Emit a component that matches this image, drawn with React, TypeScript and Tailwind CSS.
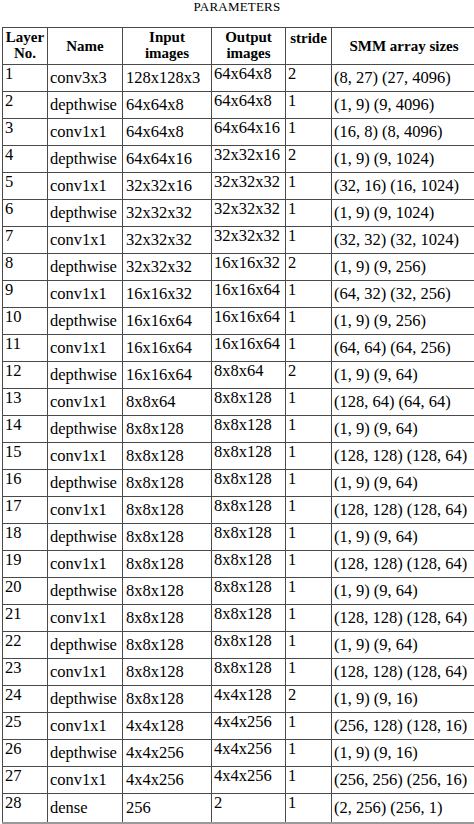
const rows: [string, string, string, string, string, string][] = [
  ["1", "conv3x3", "128x128x3", "64x64x8", "2", "(8, 27) (27, 4096)"],
  ["2", "depthwise", "64x64x8", "64x64x8", "1", "(1, 9) (9, 4096)"],
  ["3", "conv1x1", "64x64x8", "64x64x16", "1", "(16, 8) (8, 4096)"],
  ["4", "depthwise", "64x64x16", "32x32x16", "2", "(1, 9) (9, 1024)"],
  ["5", "conv1x1", "32x32x16", "32x32x32", "1", "(32, 16) (16, 1024)"],
  ["6", "depthwise", "32x32x32", "32x32x32", "1", "(1, 9) (9, 1024)"],
  ["7", "conv1x1", "32x32x32", "32x32x32", "1", "(32, 32) (32, 1024)"],
  ["8", "depthwise", "32x32x32", "16x16x32", "2", "(1, 9) (9, 256)"],
  ["9", "conv1x1", "16x16x32", "16x16x64", "1", "(64, 32) (32, 256)"],
  ["10", "depthwise", "16x16x64", "16x16x64", "1", "(1, 9) (9, 256)"],
  ["11", "conv1x1", "16x16x64", "16x16x64", "1", "(64, 64) (64, 256)"],
  ["12", "depthwise", "16x16x64", "8x8x64", "2", "(1, 9) (9, 64)"],
  ["13", "conv1x1", "8x8x64", "8x8x128", "1", "(128, 64) (64, 64)"],
  ["14", "depthwise", "8x8x128", "8x8x128", "1", "(1, 9) (9, 64)"],
  ["15", "conv1x1", "8x8x128", "8x8x128", "1", "(128, 128) (128, 64)"],
  ["16", "depthwise", "8x8x128", "8x8x128", "1", "(1, 9) (9, 64)"],
  ["17", "conv1x1", "8x8x128", "8x8x128", "1", "(128, 128) (128, 64)"],
  ["18", "depthwise", "8x8x128", "8x8x128", "1", "(1, 9) (9, 64)"],
  ["19", "conv1x1", "8x8x128", "8x8x128", "1", "(128, 128) (128, 64)"],
  ["20", "depthwise", "8x8x128", "8x8x128", "1", "(1, 9) (9, 64)"],
  ["21", "conv1x1", "8x8x128", "8x8x128", "1", "(128, 128) (128, 64)"],
  ["22", "depthwise", "8x8x128", "8x8x128", "1", "(1, 9) (9, 64)"],
  ["23", "conv1x1", "8x8x128", "8x8x128", "1", "(128, 128) (128, 64)"],
  ["24", "depthwise", "8x8x128", "4x4x128", "2", "(1, 9) (9, 16)"],
  ["25", "conv1x1", "4x4x128", "4x4x256", "1", "(256, 128) (128, 16)"],
  ["26", "depthwise", "4x4x256", "4x4x256", "1", "(1, 9) (9, 16)"],
  ["27", "conv1x1", "4x4x256", "4x4x256", "1", "(256, 256) (256, 16)"],
  ["28", "dense", "256", "2", "1", "(2, 256) (256, 1)"],
];

const cell = "border border-[#4a4a4a] pl-[2px] leading-[18px]";

export default function App() {
  return (
    <div className="w-[474px] h-[824px] overflow-hidden bg-white text-black font-['Liberation_Serif',serif]">
      {/* Caption */}
      <div className="text-center text-[13px] leading-[13px] tracking-[0.2px]">PARAMETERS</div>

      {/* Table */}
      <div className="mt-[14px] pl-[2px]">
        <table className="w-[474px] table-fixed border-collapse text-[16.5px]">
          <colgroup>
            <col className="w-[45px]" />
            <col className="w-[75px]" />
            <col className="w-[89px]" />
            <col className="w-[74px]" />
            <col className="w-[46px]" />
            <col className="w-[145px]" />
          </colgroup>
          <thead>
            <tr className="h-[37px] text-[15px] font-bold leading-[16px]">
              <th className="border border-[#4a4a4a] pb-[2px] text-center align-middle">
                Layer
                <br />
                No.
              </th>
              <th className="border border-[#4a4a4a] text-center align-middle">Name</th>
              <th className="border border-[#4a4a4a] pb-[2px] text-center align-middle">
                Input
                <br />
                images
              </th>
              <th className="border border-[#4a4a4a] pb-[2px] text-center align-middle">
                Output
                <br />
                images
              </th>
              <th className="border border-[#4a4a4a] pt-[2px] text-center align-top">stride</th>
              <th className="border border-[#4a4a4a] text-center align-middle">SMM array sizes</th>
            </tr>
          </thead>
          <tbody>
            {rows.map((r, i) => (
              <tr key={r[0]} className={i === rows.length - 1 ? "h-[30px] border-b-[3px] border-b-[#999]" : "h-[27px]"}>
                <td className={`${cell} align-top`}>{r[0]}</td>
                <td className={`${cell} align-middle`}>{r[1]}</td>
                <td className={`${cell} pl-[3px] align-middle`}>{r[2]}</td>
                <td className={`${cell} pl-[1px] align-top`}>{r[3]}</td>
                <td className={`${cell} align-top`}>{r[4]}</td>
                <td className={`${cell} pl-[1px] align-middle whitespace-nowrap`}>{r[5]}</td>
              </tr>
            ))}
          </tbody>
        </table>
      </div>
    </div>
  );
}
